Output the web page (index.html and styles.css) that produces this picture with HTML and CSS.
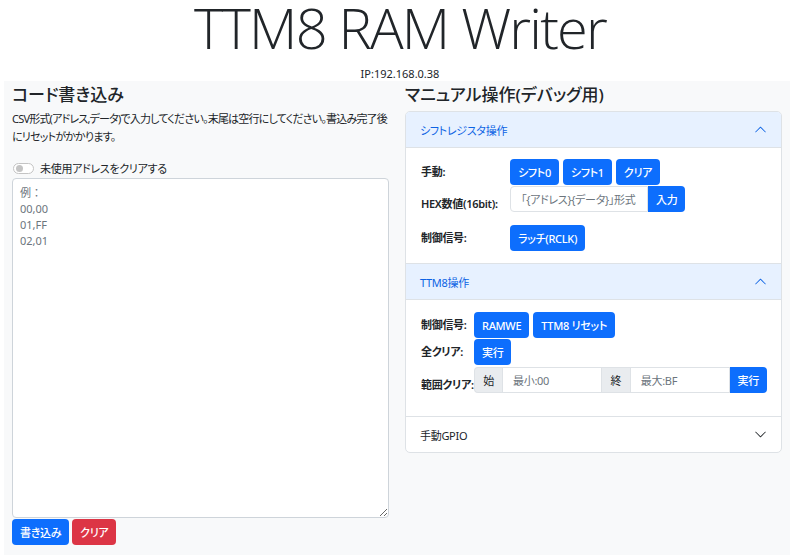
FILE: index.html
```html
<!DOCTYPE html>
<html lang="ja">
<head>
<meta charset="utf-8">
<title>TTM8 RAM Writer</title>
<link rel="stylesheet" href="styles.css">
</head>
<body>
<header class="page-head">
  <h1 class="title">TTM8 RAM Writer</h1>
  <div class="ip">IP:192.168.0.38</div>
</header>
<main class="panel">
  <section class="col">
    <h2 class="sec-title">コード書き込み</h2>
    <p class="desc">CSV形式(アドレス,データ)で入力してください。末尾は空行にしてください。書込み完了後にリセットがかかります。</p>
    <label class="switch-row">
      <span class="switch"><span class="knob"></span></span>
      <span>未使用アドレスをクリアする</span>
    </label>
    <textarea class="code" placeholder="例：&#10;00,00&#10;01,FF&#10;02,01"></textarea>
    <div class="actions">
      <button class="btn btn-primary">書き込み</button>
      <button class="btn btn-danger">クリア</button>
    </div>
  </section>
  <section class="col">
    <h2 class="sec-title">マニュアル操作(デバッグ用)</h2>
    <div class="accordion">
      <div class="acc-item">
        <div class="acc-head open">
          <span>シフトレジスタ操作</span>
          <svg class="chev up" viewBox="0 0 16 16" width="13" height="13"><path fill="currentColor" fill-rule="evenodd" d="M1.646 4.646a.5.5 0 0 1 .708 0L8 10.293l5.646-5.647a.5.5 0 0 1 .708.708l-6 6a.5.5 0 0 1-.708 0l-6-6a.5.5 0 0 1 0-.708z"/></svg>
        </div>
        <div class="acc-body body-sr">
          <div class="frow">
            <span class="lbl lbl-w1">手動:</span>
            <div class="btns">
              <button class="btn btn-primary">シフト0</button>
              <button class="btn btn-primary">シフト1</button>
              <button class="btn btn-primary">クリア</button>
            </div>
          </div>
          <div class="frow">
            <span class="lbl lbl-w1 lbl-low">HEX数値(16bit):</span>
            <div class="igroup ig-hex">
              <input class="ifield" type="text" placeholder="「{アドレス}{データ}」形式">
              <button class="btn btn-primary">入力</button>
            </div>
          </div>
          <div class="frow frow-gap">
            <span class="lbl lbl-w1">制御信号:</span>
            <div class="btns">
              <button class="btn btn-primary">ラッチ(RCLK)</button>
            </div>
          </div>
        </div>
      </div>
      <div class="acc-item">
        <div class="acc-head open">
          <span>TTM8操作</span>
          <svg class="chev up" viewBox="0 0 16 16" width="13" height="13"><path fill="currentColor" fill-rule="evenodd" d="M1.646 4.646a.5.5 0 0 1 .708 0L8 10.293l5.646-5.647a.5.5 0 0 1 .708.708l-6 6a.5.5 0 0 1-.708 0l-6-6a.5.5 0 0 1 0-.708z"/></svg>
        </div>
        <div class="acc-body body-ttm">
          <div class="frow">
            <span class="lbl lbl-w2">制御信号:</span>
            <div class="btns">
              <button class="btn btn-primary">RAMWE</button>
              <button class="btn btn-primary">TTM8 リセット</button>
            </div>
          </div>
          <div class="frow">
            <span class="lbl lbl-w2">全クリア:</span>
            <div class="btns">
              <button class="btn btn-primary">実行</button>
            </div>
          </div>
          <div class="frow frow-gap2">
            <span class="lbl lbl-w2 lbl-low">範囲クリア:</span>
            <div class="igroup ig-range">
              <span class="addon">始</span>
              <input class="ifield" type="text" placeholder="最小:00">
              <span class="addon">終</span>
              <input class="ifield" type="text" placeholder="最大:BF">
              <button class="btn btn-primary">実行</button>
            </div>
          </div>
        </div>
      </div>
      <div class="acc-item">
        <div class="acc-head">
          <span>手動GPIO</span>
          <svg class="chev" viewBox="0 0 16 16" width="13" height="13"><path fill="currentColor" fill-rule="evenodd" d="M1.646 4.646a.5.5 0 0 1 .708 0L8 10.293l5.646-5.647a.5.5 0 0 1 .708.708l-6 6a.5.5 0 0 1-.708 0l-6-6a.5.5 0 0 1 0-.708z"/></svg>
        </div>
      </div>
    </div>
  </section>
</main>
</body>
</html>
```
FILE: styles.css
```css
* { box-sizing: border-box; }

body {
  margin: 0;
  background: #fff;
  color: #212529;
  font-family: "Noto Sans", "Noto Sans CJK JP", sans-serif;
  font-feature-settings: "palt";
  font-size: 11px;
  letter-spacing: -0.3px;
}

.page-head { text-align: center; }

.title {
  margin: -1px 0 0;
  font-family: "Open Sans", "Noto Sans", sans-serif;
  font-weight: 300;
  font-size: 56px;
  line-height: 56px;
  letter-spacing: -1.8px;
  color: #212529;
}

.ip {
  padding-top: 12px;
  font-size: 11px;
  line-height: 14px;
  letter-spacing: 0;
}

.panel {
  margin: 0 10px 0 4px;
  background: #f8f9fa;
  display: grid;
  grid-template-columns: minmax(0, 1fr) minmax(0, 1fr);
  column-gap: 16px;
  padding: 2px 8px 0;
}

.col {
  min-width: 0;
  padding-bottom: 10px;
  display: flex;
  flex-direction: column;
}

.sec-title {
  margin: 0 0 3px;
  font-size: 17px;
  line-height: 24px;
  font-weight: 500;
  letter-spacing: 0;
}

.desc {
  margin: 0 0 14px;
  line-height: 18px;
  letter-spacing: -0.8px;
}

.switch-row {
  display: flex;
  align-items: center;
  gap: 6px;
  height: 16px;
  padding-left: 1px;
}

.switch {
  width: 21px;
  height: 11px;
  border: 1px solid #c4c4c4;
  border-radius: 6px;
  background: #fff;
  display: flex;
  align-items: center;
  padding-left: 2px;
}

.knob {
  width: 7px;
  height: 7px;
  border-radius: 50%;
  background: #c4c4c4;
}

.code {
  margin-top: 2px;
  height: 340px;
  width: 100%;
  border: 1px solid #ced4da;
  border-radius: 4px;
  background: #fff;
  padding: 6px 7px;
  font-family: inherit;
  font-size: 11px;
  line-height: 16px;
  color: #212529;
}
.code::placeholder { color: #6c757d; }

.actions {
  margin-top: 1px;
  display: flex;
  gap: 3px;
}

.btn {
  height: 26px;
  border: 0;
  border-radius: 4px;
  padding: 0 8px;
  font-family: inherit;
  font-feature-settings: "palt";
  font-size: 11px;
  letter-spacing: -0.3px;
  font-weight: 500;
  color: #fff;
  white-space: nowrap;
}
.btn-primary { background: #0d6efd; }
.btn-danger { background: #dc3545; }

.accordion {
  margin-top: 1px;
  border: 1px solid #dee2e6;
  border-radius: 5px;
  background: #fff;
  overflow: hidden;
}

.acc-item + .acc-item { border-top: 1px solid #dee2e6; }

.acc-head {
  height: 35px;
  display: flex;
  align-items: center;
  justify-content: space-between;
  padding: 0 14px 0 14px;
  font-size: 11px;
  color: #212529;
}
.acc-head.open {
  background: #e7f1ff;
  color: #0c63e4;
}

.chev { display: block; }
.chev.up { transform: rotate(180deg); }

.acc-body {
  border-top: 1px solid #dee2e6;
  padding: 11px 14px 12px 15px;
  display: flex;
  flex-direction: column;
  gap: 1px;
}
.body-ttm { padding-top: 12px; padding-bottom: 23px; }

.frow {
  display: flex;
  align-items: center;
  min-height: 26px;
}
.frow-gap { margin-top: 12px; }
.frow-gap2 { margin-top: 1px; }

.lbl {
  font-weight: 600;
  font-size: 11px;
  line-height: 16px;
  flex: none;
  white-space: nowrap;
}
.lbl-w1 { width: 89px; }
.lbl-w2 { width: 53px; }
.lbl-low { padding-top: 10px; }

.btns { display: flex; gap: 4px; }

.igroup {
  display: flex;
  height: 26px;
}
.ig-hex { width: 177px; }
.ig-range { flex: 1; min-width: 0; }

.ifield {
  flex: 1;
  min-width: 0;
  height: 26px;
  border: 1px solid #dee2e6;
  background: #fff;
  padding: 0 10px;
  font-family: inherit;
  font-feature-settings: "palt";
  font-size: 11px;
  letter-spacing: -0.3px;
  color: #212529;
}
.ifield::placeholder { color: #6c757d; }
.igroup > :first-child { border-radius: 4px 0 0 4px; }
.igroup > :last-child { border-radius: 0 4px 4px 0; }
.igroup .btn { flex: none; padding: 0 8px; }
.ig-hex .ifield { width: 138px; flex: none; }
.ig-range .ifield + .addon { border-left: 0; }

.addon {
  flex: none;
  width: 28px;
  height: 26px;
  display: flex;
  align-items: center;
  justify-content: center;
  background: #e9ecef;
  border: 1px solid #dee2e6;
  border-right: 0;
  color: #212529;
  font-size: 11px;
}
```
